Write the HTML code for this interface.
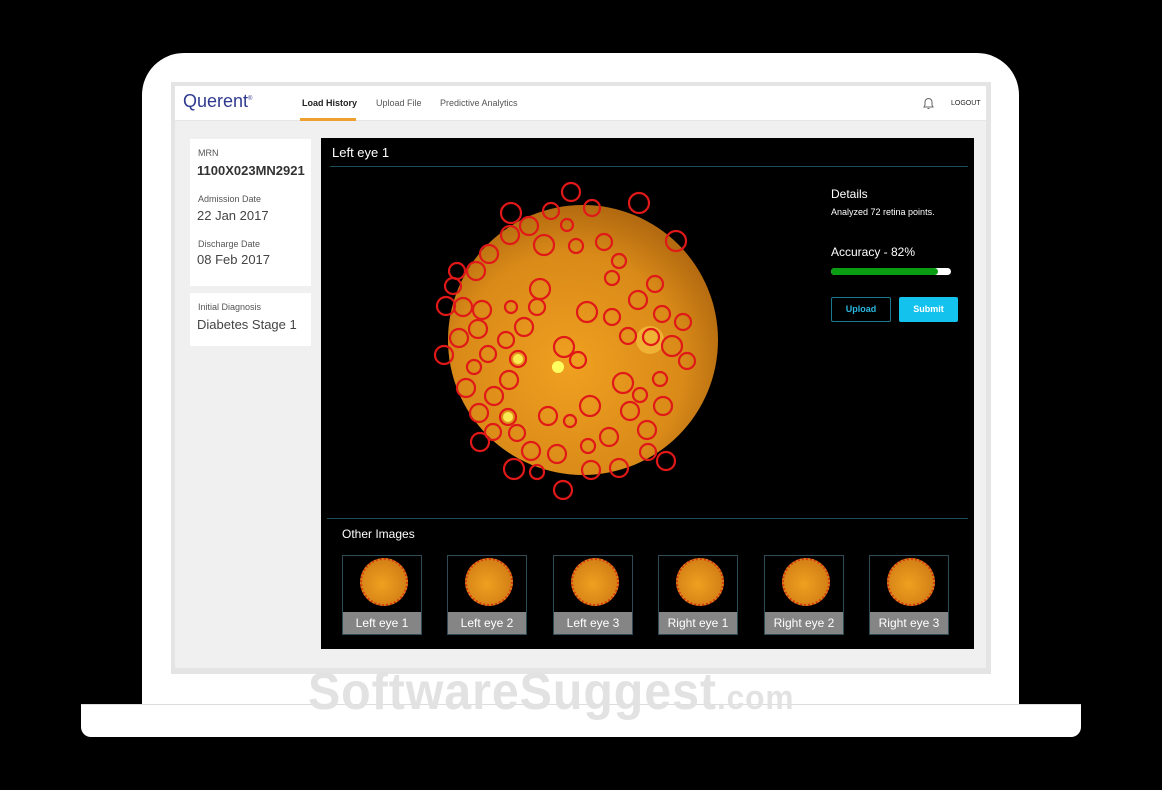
<!DOCTYPE html>
<html><head><meta charset="utf-8"><style>
*{margin:0;padding:0;box-sizing:border-box}
body{width:1162px;height:790px;background:#000;position:relative;overflow:hidden;font-family:"Liberation Sans",sans-serif}
.a{position:absolute}
.top{left:142px;top:53px;width:877px;height:660px;background:#fff;border-radius:42px 42px 0 0}
.scr{left:171px;top:82px;width:820px;height:592px;background:#e4e4e4}
.in{left:175px;top:86px;width:811px;height:582px;background:#f0f0f0}
.hdr{left:175px;top:86px;width:811px;height:35px;background:#fff;border-bottom:1px solid #e6e6e6}
.nav{font-size:9px;color:#555;top:98px}
.base{left:81px;top:704px;width:1000px;height:33px;background:#fff;border-radius:0 0 10px 10px;border-top:1px solid #ddd}
.card{background:#fff}
.lbl{font-size:9px;color:#555}
.val{font-size:13px;color:#444}
.blk{left:321px;top:138px;width:653px;height:511px;background:#000}
.thumb{width:80px;height:80px;border:1px solid #2d4a55;top:555px}
.eye{position:absolute;left:17px;top:2px;width:48px;height:48px;border-radius:50%;background:radial-gradient(circle at 45% 55%,#f0a020,#c87412);border:2px dotted #d83a10}
.tl{position:absolute;left:0;bottom:0;width:78px;height:22px;background:#858585;color:#fff;font-size:12px;text-align:center;line-height:22px}
</style></head><body>
<div class="a top"></div>
<div class="a scr"></div>
<div class="a in"></div>
<div class="a hdr"></div>
<div class="a" style="left:183px;top:91px;font-size:18px;color:#2f3a8f">Querent<sup style="font-size:6px">®</sup></div>
<div class="a nav" style="left:302px;color:#222;font-weight:bold">Load History</div>
<div class="a" style="left:300px;top:118px;width:56px;height:3px;background:#f0a030"></div>
<div class="a nav" style="left:376px">Upload File</div>
<div class="a nav" style="left:440px">Predictive Analytics</div>
<svg class="a" style="left:922px;top:96px" width="13" height="15" viewBox="0 0 13 15"><path d="M2 11 L3 9 V6 a3.5 3.5 0 0 1 7 0 V9 L11 11 Z M5.5 12.5 h2" fill="none" stroke="#666" stroke-width="1"/></svg>
<div class="a" style="left:951px;top:100px;font-size:7px;color:#222">LOGOUT</div>

<div class="a card" style="left:190px;top:139px;width:121px;height:147px"></div>
<div class="a lbl" style="left:198px;top:148px">MRN</div>
<div class="a" style="left:197px;top:163px;font-size:13px;font-weight:bold;color:#333">1100X023MN2921</div>
<div class="a lbl" style="left:198px;top:194px">Admission Date</div>
<div class="a val" style="left:197px;top:208px">22 Jan 2017</div>
<div class="a lbl" style="left:198px;top:239px">Discharge Date</div>
<div class="a val" style="left:197px;top:252px">08 Feb 2017</div>
<div class="a card" style="left:190px;top:293px;width:121px;height:53px"></div>
<div class="a lbl" style="left:198px;top:302px">Initial Diagnosis</div>
<div class="a val" style="left:197px;top:317px">Diabetes Stage 1</div>

<div class="a blk"></div>
<div class="a" style="left:332px;top:145px;color:#fff;font-size:13px">Left eye 1</div>
<div class="a" style="left:330px;top:166px;width:638px;height:1px;background:#1f4d5a"></div>
<svg class="a" style="left:430px;top:180px" width="300" height="320" viewBox="430 180 300 320">
<defs><radialGradient id="g" cx="0.45" cy="0.6" r="0.6"><stop offset="0" stop-color="#f0a020"/><stop offset="0.7" stop-color="#d98a18"/><stop offset="1" stop-color="#b36a10"/></radialGradient></defs>
<circle cx="583" cy="340" r="135" fill="url(#g)"/>
<circle cx="650" cy="340" r="14" fill="#f5c040" opacity=".7"/>
<circle cx="558" cy="367" r="6" fill="#ffff60"/>
<circle cx="518" cy="359" r="5" fill="#ffff60" opacity=".8"/>
<circle cx="508" cy="417" r="5" fill="#ffff60" opacity=".8"/>
<g fill="none" stroke="#e01818" stroke-width="2.2">
<circle cx="571" cy="192" r="9"/><circle cx="511" cy="213" r="10"/><circle cx="551" cy="211" r="8"/><circle cx="592" cy="208" r="8"/><circle cx="639" cy="203" r="10"/><circle cx="529" cy="226" r="9"/><circle cx="567" cy="225" r="6"/><circle cx="510" cy="235" r="9"/><circle cx="544" cy="245" r="10"/><circle cx="576" cy="246" r="7"/><circle cx="604" cy="242" r="8"/><circle cx="676" cy="241" r="10"/><circle cx="489" cy="254" r="9"/><circle cx="619" cy="261" r="7"/><circle cx="457" cy="271" r="8"/><circle cx="476" cy="271" r="9"/><circle cx="453" cy="286" r="8"/><circle cx="540" cy="289" r="10"/><circle cx="612" cy="278" r="7"/><circle cx="655" cy="284" r="8"/><circle cx="638" cy="300" r="9"/><circle cx="446" cy="306" r="9"/><circle cx="463" cy="307" r="9"/><circle cx="482" cy="310" r="9"/><circle cx="511" cy="307" r="6"/><circle cx="537" cy="307" r="8"/><circle cx="587" cy="312" r="10"/><circle cx="612" cy="317" r="8"/><circle cx="662" cy="314" r="8"/><circle cx="683" cy="322" r="8"/><circle cx="478" cy="329" r="9"/><circle cx="524" cy="327" r="9"/><circle cx="459" cy="338" r="9"/><circle cx="506" cy="340" r="8"/><circle cx="628" cy="336" r="8"/><circle cx="651" cy="337" r="8"/><circle cx="444" cy="355" r="9"/><circle cx="488" cy="354" r="8"/><circle cx="518" cy="359" r="8"/><circle cx="564" cy="347" r="10"/><circle cx="578" cy="360" r="8"/><circle cx="672" cy="346" r="10"/><circle cx="687" cy="361" r="8"/><circle cx="474" cy="367" r="7"/><circle cx="509" cy="380" r="9"/><circle cx="623" cy="383" r="10"/><circle cx="660" cy="379" r="7"/><circle cx="466" cy="388" r="9"/><circle cx="494" cy="396" r="9"/><circle cx="590" cy="406" r="10"/><circle cx="640" cy="395" r="7"/><circle cx="663" cy="406" r="9"/><circle cx="479" cy="413" r="9"/><circle cx="508" cy="417" r="8"/><circle cx="548" cy="416" r="9"/><circle cx="630" cy="411" r="9"/><circle cx="570" cy="421" r="6"/><circle cx="493" cy="432" r="8"/><circle cx="517" cy="433" r="8"/><circle cx="609" cy="437" r="9"/><circle cx="647" cy="430" r="9"/><circle cx="480" cy="442" r="9"/><circle cx="531" cy="451" r="9"/><circle cx="557" cy="454" r="9"/><circle cx="588" cy="446" r="7"/><circle cx="619" cy="468" r="9"/><circle cx="648" cy="452" r="8"/><circle cx="666" cy="461" r="9"/><circle cx="514" cy="469" r="10"/><circle cx="591" cy="470" r="9"/><circle cx="537" cy="472" r="7"/><circle cx="563" cy="490" r="9"/>
</g></svg>
<div class="a" style="left:831px;top:187px;color:#fff;font-size:12px">Details</div>
<div class="a" style="left:831px;top:207px;color:#fff;font-size:9px">Analyzed 72 retina points.</div>
<div class="a" style="left:831px;top:245px;color:#fff;font-size:12px">Accuracy - 82%</div>
<div class="a" style="left:831px;top:268px;width:120px;height:7px;background:#fff;border-radius:4px"></div>
<div class="a" style="left:831px;top:268px;width:107px;height:7px;background:#0a9c12;border-radius:4px"></div>
<div class="a" style="left:831px;top:297px;width:60px;height:25px;border:1px solid #1a7a90;border-radius:2px;color:#2ab8e0;font-size:9px;font-weight:bold;text-align:center;line-height:23px">Upload</div>
<div class="a" style="left:899px;top:297px;width:59px;height:25px;background:#14c2ee;border-radius:2px;color:#fff;font-size:9px;font-weight:bold;text-align:center;line-height:25px">Submit</div>
<div class="a" style="left:327px;top:518px;width:641px;height:1px;background:#1f4d5a"></div>
<div class="a" style="left:342px;top:527px;color:#fff;font-size:12px">Other Images</div>

<div class="a thumb" style="left:342px"><div class="eye"></div><div class="tl">Left eye 1</div></div>
<div class="a thumb" style="left:447px"><div class="eye"></div><div class="tl">Left eye 2</div></div>
<div class="a thumb" style="left:553px"><div class="eye"></div><div class="tl">Left eye 3</div></div>
<div class="a thumb" style="left:658px"><div class="eye"></div><div class="tl">Right eye 1</div></div>
<div class="a thumb" style="left:764px"><div class="eye"></div><div class="tl">Right eye 2</div></div>
<div class="a thumb" style="left:869px"><div class="eye"></div><div class="tl">Right eye 3</div></div>

<div class="a base"></div>
<div class="a" style="left:308px;top:662px;font-size:52px;font-weight:bold;color:#e2e2e2;letter-spacing:1px;transform:scaleX(0.93);transform-origin:left">SoftwareSuggest<span style="font-size:34px">.com</span></div>
</body></html>
